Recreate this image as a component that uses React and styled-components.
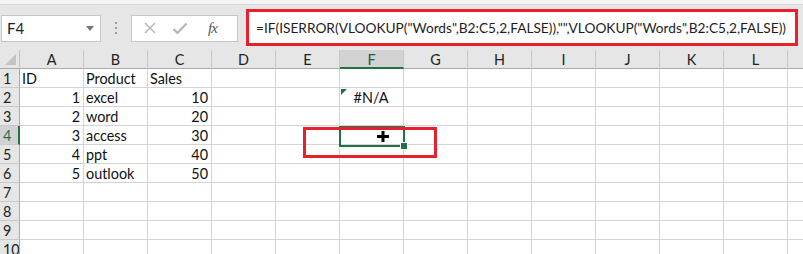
import React from "react";
import styled, { createGlobalStyle } from "styled-components";

const Global = createGlobalStyle`
  html, body { margin: 0; padding: 0; background: #e6e6e6; }
  body { font-family: "Lato", "Liberation Sans", sans-serif; }
`;

const GREEN = "#217346";
const RED = "#e8202c";

const Page = styled.div`
  position: relative;
  width: 803px;
  height: 254px;
  overflow: hidden;
  background: #e6e6e6;
`;

const TopEdge = styled.div`
  height: 4px;
  background: #f3f3f3;
  border-bottom: 1px solid #d6d6d6;
`;

const BarRow = styled.div`
  display: flex;
  align-items: center;
  height: 44px;
  padding-left: 1px;
`;

const NameBox = styled.div`
  box-sizing: border-box;
  width: 100px;
  height: 27px;
  margin-top: 2px;
  background: #fff;
  border: 1px solid #c6c6c6;
  display: flex;
  align-items: center;
  justify-content: space-between;
  padding: 0 6px 0 5px;
  font-size: 15px;
  color: #222;
`;

const Caret = styled.span`
  width: 0;
  height: 0;
  border-left: 4px solid transparent;
  border-right: 4px solid transparent;
  border-top: 5px solid #777;
`;

const Grip = styled.div`
  width: 30px;
  display: flex;
  flex-direction: column;
  align-items: center;
  gap: 3px;
  margin-top: 2px;
  span {
    width: 2px;
    height: 2px;
    background: #9a9a9a;
  }
`;

const ButtonBox = styled.div`
  box-sizing: border-box;
  width: 107px;
  height: 27px;
  margin-top: 2px;
  background: #fff;
  border: 1px solid #c6c6c6;
  display: flex;
  align-items: center;
  padding-left: 12px;
  gap: 16px;
`;

const Fx = styled.span`
  font-family: "Liberation Serif", serif;
  font-style: italic;
  font-size: 15px;
  color: #555;
  margin-left: 4px;
  letter-spacing: -1px;
`;

const FormulaBox = styled.div`
  box-sizing: border-box;
  margin-left: 8px;
  width: 552px;
  height: 37px;
  background: #fff;
  border: 3px solid ${RED};
  display: flex;
  align-items: center;
  padding-left: 7px;
  font-size: 13.7px;
  color: #1e1e1e;
  white-space: nowrap;
  overflow: hidden;
`;

const Sheet = styled.div`
  position: relative;
  margin-top: 1px;
  display: grid;
  grid-template-columns: 20px repeat(12, 64px) 64px;
  grid-auto-rows: 19px;
  background: #fff;
  font-size: 14.4px;
  color: #111;
`;

const Corner = styled.div`
  background: #e6e6e6;
  border-right: 1px solid #c0c0c0;
  border-bottom: 1px solid #ababab;
  box-sizing: border-box;
  position: relative;
  &::after {
    content: "";
    position: absolute;
    right: 3px;
    bottom: 3px;
    border-left: 11px solid transparent;
    border-bottom: 11px solid #c3c3c3;
  }
`;

const ColHead = styled.div`
  box-sizing: border-box;
  background: ${(p) => (p.$active ? "#d2d2d2" : "#e6e6e6")};
  border-right: 1px solid #c8c8c8;
  border-bottom: ${(p) => (p.$active ? `2px solid ${GREEN}` : "1px solid #ababab")};
  display: flex;
  align-items: center;
  justify-content: center;
  color: ${(p) => (p.$active ? "#1e5c38" : "#222")};
  font-size: 14.4px;
  padding-top: 1px;
`;

const RowHead = styled.div`
  box-sizing: border-box;
  background: ${(p) => (p.$active ? "#d2d2d2" : "#e6e6e6")};
  border-right: ${(p) => (p.$active ? `2px solid ${GREEN}` : "1px solid #ababab")};
  border-bottom: 1px solid #c8c8c8;
  display: flex;
  align-items: center;
  padding-left: 3px;
  color: ${(p) => (p.$active ? GREEN : "#222")};
  font-size: 14.4px;
  overflow: hidden;
`;

const Cell = styled.div`
  position: relative;
  box-sizing: border-box;
  border-right: 1px solid #d4d4d4;
  border-bottom: 1px solid #d4d4d4;
  display: flex;
  align-items: flex-end;
  justify-content: ${(p) =>
    p.$align === "right" ? "flex-end" : p.$align === "center" ? "center" : "flex-start"};
  padding: 0 3px 0 2px;
  line-height: 17px;
  white-space: nowrap;
`;

const ErrorFlag = styled.span`
  position: absolute;
  left: 1px;
  top: 1px;
  border-top: 6px solid ${GREEN};
  border-right: 6px solid transparent;
`;

const Selection = styled.div`
  position: absolute;
  left: 339px;
  top: 76px;
  width: 66px;
  height: 21px;
  box-sizing: border-box;
  border: 2px solid ${GREEN};
  &::after {
    content: "";
    position: absolute;
    right: -5px;
    bottom: -5px;
    width: 6px;
    height: 6px;
    background: ${GREEN};
    border: 1px solid #fff;
  }
`;

const Callout = styled.div`
  position: absolute;
  left: 303px;
  top: 77px;
  width: 134px;
  height: 31px;
  box-sizing: border-box;
  border: 3px solid ${RED};
`;

const Cursor = styled.svg`
  position: absolute;
  left: 377px;
  top: 81px;
`;

const cols = ["A", "B", "C", "D", "E", "F", "G", "H", "I", "J", "K", "L", ""];

const data = {
  1: { A: ["ID", "left"], B: ["Product", "left"], C: ["Sales", "left"] },
  2: { A: ["1", "right"], B: ["excel", "left"], C: ["10", "right"], F: ["#N/A", "center", true] },
  3: { A: ["2", "right"], B: ["word", "left"], C: ["20", "right"] },
  4: { A: ["3", "right"], B: ["access", "left"], C: ["30", "right"] },
  5: { A: ["4", "right"], B: ["ppt", "left"], C: ["40", "right"] },
  6: { A: ["5", "right"], B: ["outlook", "left"], C: ["50", "right"] },
};

const rows = [1, 2, 3, 4, 5, 6, 7, 8, 9, 10];

export default function App() {
  return (
    <Page>
      <Global />
      <TopEdge />
      <BarRow>
        <NameBox>
          F4
          <Caret />
        </NameBox>
        <Grip>
          <span />
          <span />
          <span />
        </Grip>
        <ButtonBox>
          <svg width="12" height="12" viewBox="0 0 12 12">
            <path d="M1 1 L11 11 M11 1 L1 11" stroke="#b4b4b4" strokeWidth="1.4" fill="none" />
          </svg>
          <svg width="16" height="13" viewBox="0 0 16 13">
            <path d="M1.5 7 L5.5 11 L14.5 1.5" stroke="#b4b4b4" strokeWidth="2" fill="none" />
          </svg>
          <Fx>fx</Fx>
        </ButtonBox>
        <FormulaBox>
          =IF(ISERROR(VLOOKUP("Words",B2:C5,2,FALSE)),"",VLOOKUP("Words",B2:C5,2,FALSE))
        </FormulaBox>
      </BarRow>
      <Sheet>
        <Corner />
        {cols.map((c, i) => (
          <ColHead key={i} $active={c === "F"}>
            {c}
          </ColHead>
        ))}
        {rows.map((r) => (
          <React.Fragment key={r}>
            <RowHead $active={r === 4}>{r}</RowHead>
            {cols.map((c, i) => {
              const v = data[r] && data[r][c];
              return (
                <Cell key={i} $align={v ? v[1] : "left"}>
                  {v && v[2] && <ErrorFlag />}
                  {v ? v[0] : ""}
                </Cell>
              );
            })}
          </React.Fragment>
        ))}
        <Selection />
        <Callout />
        <Cursor width="12" height="11" viewBox="0 0 12 11">
          <path d="M4.5 0 H7.5 V4 H12 V7 H7.5 V11 H4.5 V7 H0 V4 H4.5 Z" fill="#000" />
        </Cursor>
      </Sheet>
    </Page>
  );
}
